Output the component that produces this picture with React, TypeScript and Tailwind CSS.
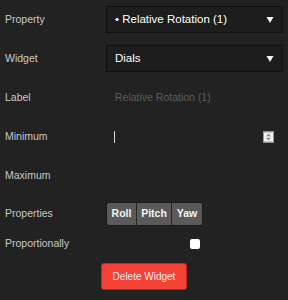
import React from "react";

const Arrow = () => (
  <svg width="8" height="7" viewBox="0 0 8 7" className="absolute right-[8px] top-1/2 -translate-y-1/2">
    <path d="M0.5 0.5 H7.5 L4 6.5 Z" fill="#f2f2f2" />
  </svg>
);

function Row({ label, children, h = "h-[27px]" }: { label: string; children?: React.ReactNode; h?: string }) {
  return (
    <div className={`flex items-center ${h}`}>
      <div className="w-[101px] shrink-0 text-[#c8c8c8] text-[10.5px]">{label}</div>
      <div className="flex-1 flex items-center h-full">{children}</div>
    </div>
  );
}

export default function App() {
  return (
    <div
      className="w-[288px] h-[300px] bg-[#222222] px-[5px] pt-[6px] text-[11px] flex flex-col"
      style={{ fontFamily: '"Liberation Sans", Arial, sans-serif' }}
    >
      <div className="flex flex-col gap-[12px]">
        <Row label="Property">
          <div className="relative w-full h-full bg-[#1d1d1d] border border-[#111111] flex items-center pl-[8px] text-white text-[11.5px]">
            • Relative Rotation (1)
            <Arrow />
          </div>
        </Row>
        <Row label="Widget">
          <div className="relative w-full h-full bg-[#1d1d1d] border border-[#111111] flex items-center pl-[8px] text-white text-[11.5px]">
            Dials
            <Arrow />
          </div>
        </Row>
        <Row label="Label">
          <div className="w-full h-full flex items-center pl-[9px] text-[#5c5c5c] text-[10.5px]">Relative Rotation (1)</div>
        </Row>
        <Row label="Minimum">
          <div className="relative w-full h-full flex items-center pl-[8px]">
            <div className="w-px h-[12px] bg-[#d8d8d8]" />
            <div className="absolute right-[9px] top-1/2 -translate-y-1/2 w-[11px] h-[11px] bg-[#f0f0f0] border border-[#9a9a9a] flex flex-col items-center justify-center gap-[1px]">
              <svg width="5" height="3" viewBox="0 0 5 3"><path d="M0 3 L2.5 0 L5 3 Z" fill="#8a8a8a" /></svg>
              <svg width="5" height="3" viewBox="0 0 5 3"><path d="M0 0 L2.5 3 L5 0 Z" fill="#8a8a8a" /></svg>
            </div>
          </div>
        </Row>
        <Row label="Maximum" />
        <Row label="Properties" h="h-[26px]">
          <div className="flex h-[24px] border border-[#1a1a1a] rounded-[3px] overflow-hidden text-[#f4f4f4] font-semibold text-[10.5px]">
            <div className="w-[30px] flex items-center justify-center bg-[#5a5a5a] border-r border-[#262626]">Roll</div>
            <div className="w-[35px] flex items-center justify-center bg-[#5a5a5a] border-r border-[#262626]">Pitch</div>
            <div className="w-[30px] flex items-center justify-center bg-[#5a5a5a]">Yaw</div>
          </div>
        </Row>
      </div>
      <div className="mt-[8px]">
        <Row label="Proportionally" h="h-[18px]">
          <div className="w-full flex justify-center">
            <div className="w-[10px] h-[10px] bg-white rounded-[2px]" />
          </div>
        </Row>
      </div>
      <div className="flex justify-center mt-[10px]">
        <div className="w-[86px] h-[27px] bg-[#f44336] border border-[#c0261c] rounded-[3px] flex items-center justify-center text-[#fbeaea] text-[10px]">
          Delete Widget
        </div>
      </div>
    </div>
  );
}
